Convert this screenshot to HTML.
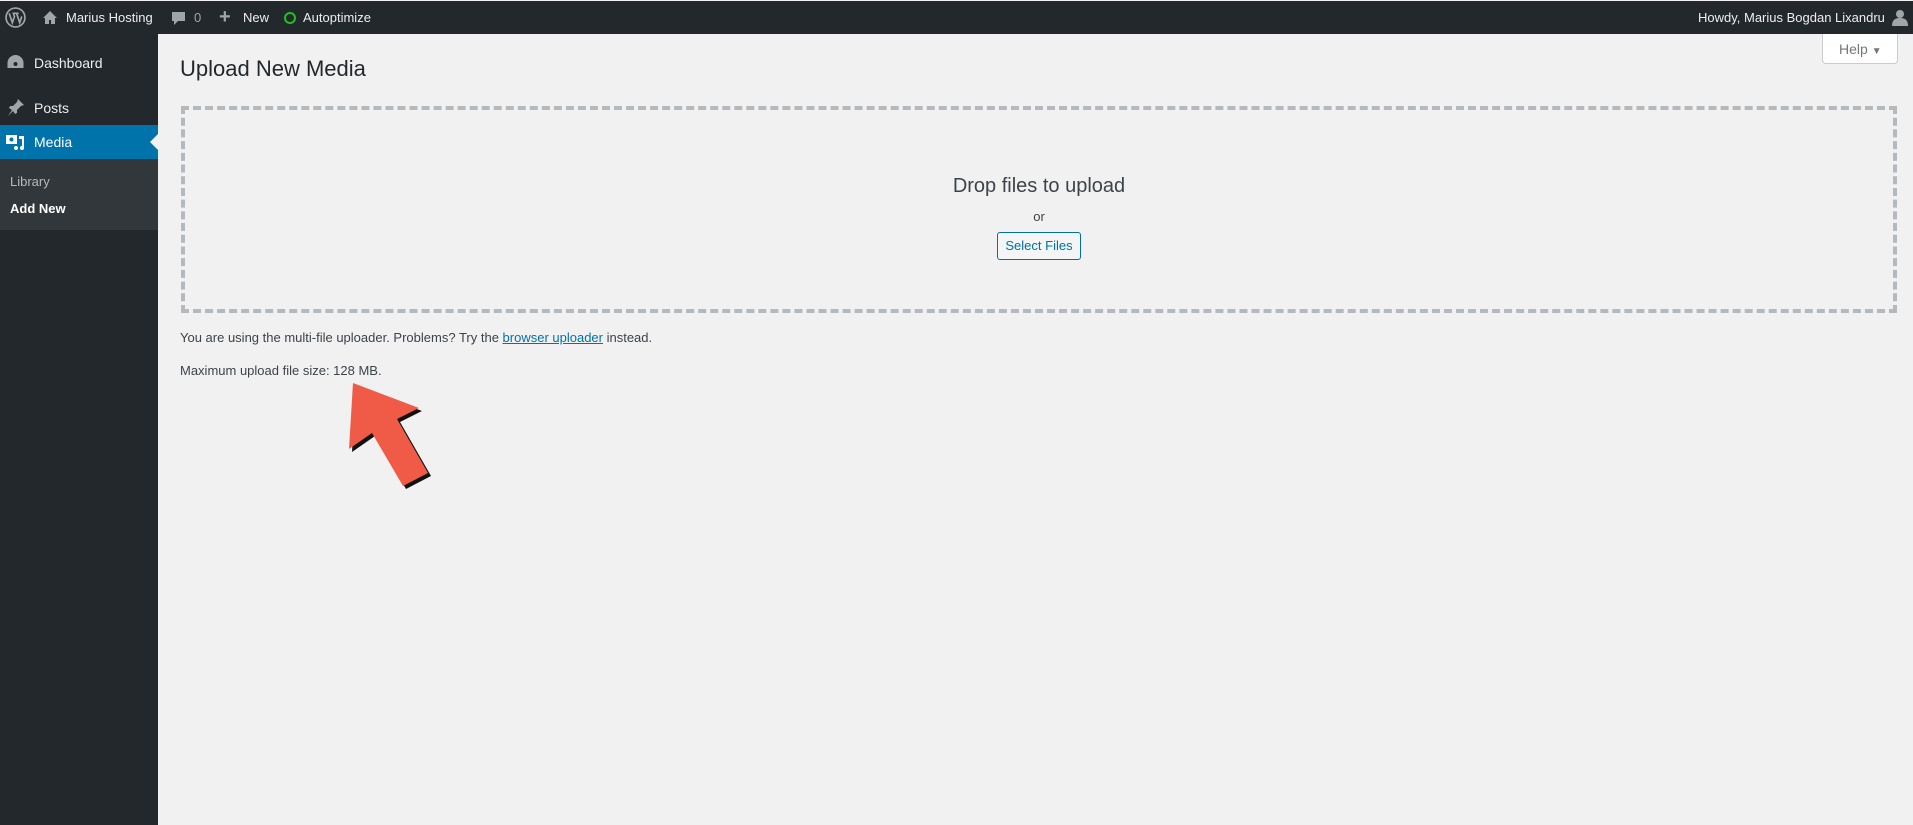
<!DOCTYPE html>
<html><head><meta charset="utf-8"><style>
*{box-sizing:border-box;margin:0;padding:0}
body{width:1913px;height:825px;background:#f1f1f1;font-family:"Liberation Sans",sans-serif;position:relative;overflow:hidden;color:#3c434a}
.bar{position:absolute;left:0;top:1px;width:1913px;height:33px;background:#23282d;color:#eee;font-size:13px}
.bar span{position:absolute;top:9px}
.side{position:absolute;left:0;top:34px;width:158px;height:791px;background:#23282d}
.side .it{position:absolute;left:34px;color:#eee;font-size:14px}
.abs{position:absolute}
</style></head><body>
<div class="bar">
<svg class="abs" style="left:5px;top:6px" width="21" height="21" viewBox="0 0 20 20"><circle cx="10" cy="10" r="9" fill="none" stroke="#a0a5aa" stroke-width="1.6"/><path d="M4 6l3 9 2-6-1-3h5l-2 0 3 9 2-6" fill="none" stroke="#a0a5aa" stroke-width="1.6"/></svg>
<svg class="abs" style="left:42px;top:9px" width="16" height="15" viewBox="0 0 16 15"><path d="M8 1L1 8h2v6h4v-4h2v4h4V8h2z" fill="#a0a5aa"/></svg>
<span style="left:66px">Marius Hosting</span>
<svg class="abs" style="left:171px;top:10px" width="15" height="15" viewBox="0 0 15 15"><path d="M1 1h13v9H7l-4 4v-4H1z" fill="#a0a5aa"/></svg>
<span style="left:194px;color:#a0a5aa">0</span>
<span style="left:219px;top:5px;font-size:20px;color:#a0a5aa;font-weight:bold">+</span>
<span style="left:243px">New</span>
<span style="left:284px;top:11px;width:12px;height:12px;border:2.5px solid #1ec11e;border-radius:50%"></span>
<span style="left:303px">Autoptimize</span>
<span style="left:1698px">Howdy, Marius Bogdan Lixandru</span>
<svg class="abs" style="left:1892px;top:8px" width="16" height="18" viewBox="0 0 16 18"><circle cx="8" cy="5" r="4" fill="#a0a5aa"/><path d="M0 17c0-6 3-8 8-8s8 2 8 8z" fill="#a0a5aa"/></svg>
</div>
<div class="side">
<svg class="abs" style="left:7px;top:20px" width="17" height="15" viewBox="0 0 17 15"><path d="M8.5 1A8 8 0 0 0 .5 9v5h16V9a8 8 0 0 0-8-8z" fill="#a0a5aa"/><circle cx="8.5" cy="10" r="2" fill="#23282d"/></svg>
<div class="it" style="top:21px">Dashboard</div>
<svg class="abs" style="left:7px;top:64px" width="18" height="18" viewBox="0 0 18 18"><path d="M11 1l6 6-3 1-4 4 0 3-2 1-2-3-5 5 4-6-3-2 1-2 3 0 4-4z" fill="#a0a5aa"/></svg>
<div class="it" style="top:66px">Posts</div>
<div class="abs" style="left:0;top:91px;width:158px;height:34px;background:#0073aa"></div>
<div class="abs" style="left:150px;top:100px;border:8px solid transparent;border-right-color:#f1f1f1;border-left:0"></div>
<svg class="abs" style="left:6px;top:99px" width="20" height="18" viewBox="0 0 20 18"><rect x="0" y="2" width="11" height="9" fill="#fff"/><circle cx="5.5" cy="6.5" r="2" fill="#0073aa"/><path d="M13 3h5v12a2 2 0 1 1-2-2V6h-3z" fill="#fff"/><circle cx="10" cy="15" r="2" fill="#fff"/></svg>
<div class="it" style="top:100px;color:#fff">Media</div>
<div class="abs" style="left:0;top:125px;width:158px;height:71px;background:#32373c"></div>
<div class="abs" style="left:10px;top:140px;font-size:13px;color:#b4b9be">Library</div>
<div class="abs" style="left:10px;top:167px;font-size:13px;color:#fff;font-weight:bold">Add New</div>
</div>
<div class="abs" style="left:180px;top:56px;font-size:22px;color:#23282d">Upload New Media</div>
<div class="abs" style="left:1822px;top:34px;width:76px;height:30px;background:#fff;border:1px solid #ccc;border-top:0;border-radius:0 0 4px 4px;font-size:14px;color:#72777c;padding:7px 0 0 16px">Help <span style="font-size:10px">▼</span></div>
<div class="abs" style="left:181px;top:106px;width:1716px;height:207px;border:4px dashed #b4b9be"></div>
<div class="abs" style="left:181px;top:175px;width:1716px;text-align:center;font-size:20px;color:#3c434a">Drop files to upload</div>
<div class="abs" style="left:181px;top:209px;width:1716px;text-align:center;font-size:13px">or</div>
<div class="abs" style="left:997px;top:232px;width:84px;height:28px;border:1px solid #0071a1;border-radius:3px;background:#f3f5f6;color:#0071a1;font-size:13px;text-align:center;line-height:26px">Select Files</div>
<div class="abs" style="left:180px;top:330px;font-size:13px">You are using the multi-file uploader. Problems? Try the <span style="color:#0073aa;text-decoration:underline">browser uploader</span> instead.</div>
<div class="abs" style="left:180px;top:363px;font-size:13px">Maximum upload file size: 128 MB.</div>
<svg class="abs" style="left:0;top:0" width="500" height="500"><polygon points="356,386 352,452 375,436 406,489 431,476 400,422 422,411" fill="#111"/><polygon points="353,383 349,449 372,433 403,486 428,473 397,419 419,408" fill="#f05b47"/></svg>
</body></html>
